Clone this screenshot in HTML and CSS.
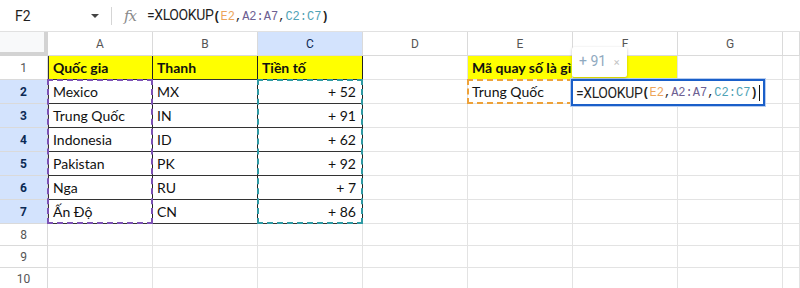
FILE: index.html
```html
<!DOCTYPE html>
<html lang="vi">
<head>
    <meta charset="UTF-8">
    <title>XLOOKUP</title>
    <link rel="stylesheet" href="styles.css">
</head>
<body>
    <div class="formula-bar">
        <div class="name-box">F2</div>
        <span class="caret"></span>
        <span class="sep"></span>
        <span class="fx">fx</span>
        <div class="formula">
            <span class="fn">=XLOOKUP</span><span class="mono"><b>(</b><span class="r-e">E2</span>,<span class="r-a">A2:A7</span>,<span class="r-c">C2:C7</span><b>)</b></span>
        </div>
    </div>

    <div class="sheet">
        <div class="cells">
            <!-- header row -->
            <div class="corner"></div>
            <div class="ch">A</div>
            <div class="ch">B</div>
            <div class="ch on">C</div>
            <div class="ch">D</div>
            <div class="ch">E</div>
            <div class="ch">F</div>
            <div class="ch">G</div>
            <div class="ch"></div>

            <!-- row 1 -->
            <div class="rh">1</div>
            <div class="c tb tl yl bold">Quốc gia</div>
            <div class="c tb yl bold">Thanh</div>
            <div class="c tb yl bold">Tiền tố</div>
            <div class="c"></div>
            <div class="c yl bold spill">Mã quay số là gì</div>
            <div class="c yl"></div>
            <div class="c"></div>
            <div class="c"></div>

            <!-- row 2 -->
            <div class="rh on">2</div>
            <div class="c tb tl">Mexico</div>
            <div class="c tb">MX</div>
            <div class="c tb num">+ 52</div>
            <div class="c"></div>
            <div class="c">Trung Quốc</div>
            <div class="c"></div>
            <div class="c"></div>
            <div class="c"></div>

            <div class="rh on">3</div>
            <div class="c tb tl">Trung Quốc</div>
            <div class="c tb">IN</div>
            <div class="c tb num">+ 91</div>
            <div class="c"></div><div class="c"></div><div class="c"></div><div class="c"></div><div class="c"></div>

            <div class="rh on">4</div>
            <div class="c tb tl">Indonesia</div>
            <div class="c tb">ID</div>
            <div class="c tb num">+ 62</div>
            <div class="c"></div><div class="c"></div><div class="c"></div><div class="c"></div><div class="c"></div>

            <div class="rh on">5</div>
            <div class="c tb tl">Pakistan</div>
            <div class="c tb">PK</div>
            <div class="c tb num">+ 92</div>
            <div class="c"></div><div class="c"></div><div class="c"></div><div class="c"></div><div class="c"></div>

            <div class="rh on">6</div>
            <div class="c tb tl">Nga</div>
            <div class="c tb">RU</div>
            <div class="c tb num">+ 7</div>
            <div class="c"></div><div class="c"></div><div class="c"></div><div class="c"></div><div class="c"></div>

            <div class="rh on">7</div>
            <div class="c tb tl">Ấn Độ</div>
            <div class="c tb">CN</div>
            <div class="c tb num">+ 86</div>
            <div class="c"></div><div class="c"></div><div class="c"></div><div class="c"></div><div class="c"></div>

            <div class="rh">8</div>
            <div class="c"></div><div class="c"></div><div class="c"></div><div class="c"></div><div class="c"></div><div class="c"></div><div class="c"></div><div class="c"></div>

            <div class="rh">9</div>
            <div class="c"></div><div class="c"></div><div class="c"></div><div class="c"></div><div class="c"></div><div class="c"></div><div class="c"></div><div class="c"></div>

            <div class="rh">10</div>
            <div class="c"></div><div class="c"></div><div class="c"></div><div class="c"></div><div class="c"></div><div class="c"></div><div class="c"></div><div class="c"></div>
        </div>

        <!-- formula range highlights + active cell, same grid laid over the cells -->
        <div class="marks">
            <div class="range range-a"></div>
            <div class="range range-c"></div>
            <div class="range range-e"></div>
            <div class="editor">
                <span class="fn">=XLOOKUP</span><span class="mono"><b>(</b><span class="r-e">E2</span>,<span class="r-a">A2:A7</span>,<span class="r-c">C2:C7</span><b>)</b></span><span class="cursor"></span>
            </div>
        </div>

        <div class="tip">+ 91 <span class="x">×</span></div>
    </div>
</body>
</html>
```

FILE: styles.css
```css
body {
    margin: 0;
    background: #fff;
    overflow: hidden;
    font-family: Roboto, "Liberation Sans", sans-serif;
}

/* formula bar */
.formula-bar {
    display: flex;
    align-items: center;
    height: 31px;
    border-bottom: 1px solid #e1e1e1;
    color: #1f1f1f;
}
.name-box {
    width: 76px;
    padding-left: 15px;
    font-size: 14px;
}
.caret {
    width: 0;
    height: 0;
    border-left: 4px solid transparent;
    border-right: 4px solid transparent;
    border-top: 4px solid #444;
    margin-right: 12px;
}
.sep {
    width: 1px;
    height: 18px;
    background: #d5d5d5;
    margin-right: 12px;
}
.fx {
    font-family: "DejaVu Serif", serif;
    font-style: italic;
    font-size: 15px;
    color: #8a8a8a;
    letter-spacing: -1px;
    margin-right: 11px;
}
.formula {
    font-size: 14px;
}
.fn {
    font-family: Roboto, "Liberation Sans", sans-serif;
    letter-spacing: -0.4px;
}
.mono {
    font-family: "Liberation Mono", monospace;
    font-size: 12px;
}
.mono b {
    font-weight: bold;
}
.r-e { color: #eca55a; }
.r-a { color: #6d6092; }
.r-c { color: #4fa3b6; }

/* grid */
.sheet {
    position: relative;
    display: grid;
}
.cells, .marks {
    grid-area: 1 / 1;
    display: grid;
    grid-template-columns: 48px repeat(7, 105px) 1fr;
    grid-template-rows: 24px repeat(7, 24px) repeat(3, 22px);
}
.marks {
    pointer-events: none;
}
.corner {
    background: #f8f9fa;
    border-right: 4px solid #d3d3d3;
    border-bottom: 4px solid #d3d3d3;
    box-sizing: border-box;
}
.ch, .rh {
    box-sizing: border-box;
    display: flex;
    align-items: center;
    justify-content: center;
    font-size: 12px;
    color: #555;
    border-right: 1px solid #dadada;
    border-bottom: 1px solid #dadada;
}
.ch.on, .rh.on {
    background: #d3e3fd;
    color: #0b2a55;
}
.rh.on {
    font-weight: bold;
}
.c {
    box-sizing: border-box;
    display: flex;
    align-items: center;
    padding: 0 4px;
    font-family: Lato, "Liberation Sans", sans-serif;
    font-size: 14px;
    color: #111;
    border-right: 1px solid #e3e3e3;
    border-bottom: 1px solid #e3e3e3;
    white-space: nowrap;
    overflow: hidden;
}
.yl {
    background: #ffff00;
}
.bold {
    font-weight: bold;
}
.tb {
    border-right-color: #222;
    border-bottom-color: #333;
}
.tl {
    border-left: 1px solid #333;
}
.num {
    justify-content: flex-end;
    padding-right: 6px;
}
.spill {
    overflow: visible;
}

/* formula ranges */
.range {
    box-sizing: border-box;
    margin: -1px 0 0 -1px;
}
.range-a {
    grid-column: 2;
    grid-row: 3 / 9;
    border: 2px dashed #7d52b5;
}
.range-c {
    grid-column: 4;
    grid-row: 3 / 9;
    border: 2px dashed #2f9aa4;
}
.range-e {
    grid-column: 6;
    grid-row: 3;
    border: 2px dashed #eea23a;
}

.editor {
    grid-column: 7 / 10;
    grid-row: 3;
    justify-self: start;
    box-sizing: border-box;
    display: flex;
    align-items: center;
    margin: -1px 0 -2px -2px;
    padding: 0 3px 0 3px;
    background: #fff;
    border: 2px solid #1a5fc9;
    box-shadow: 0 0 0 1px #b7cdf0;
    font-size: 14px;
    color: #1f1f1f;
}
.cursor {
    width: 1px;
    height: 16px;
    background: #111;
    margin-left: 1px;
}

.tip {
    position: absolute;
    left: 572px;
    top: 15px;
    width: 55px;
    height: 30px;
    box-sizing: border-box;
    padding: 6px 0 0 7px;
    background: #fff;
    box-shadow: 0 1px 3px rgba(0, 0, 0, 0.25);
    border-radius: 2px;
    font-size: 14px;
    color: #8fa9c0;
}
.tip .x {
    font-size: 11px;
    color: #c4c4c4;
    margin-left: 4px;
}
```
